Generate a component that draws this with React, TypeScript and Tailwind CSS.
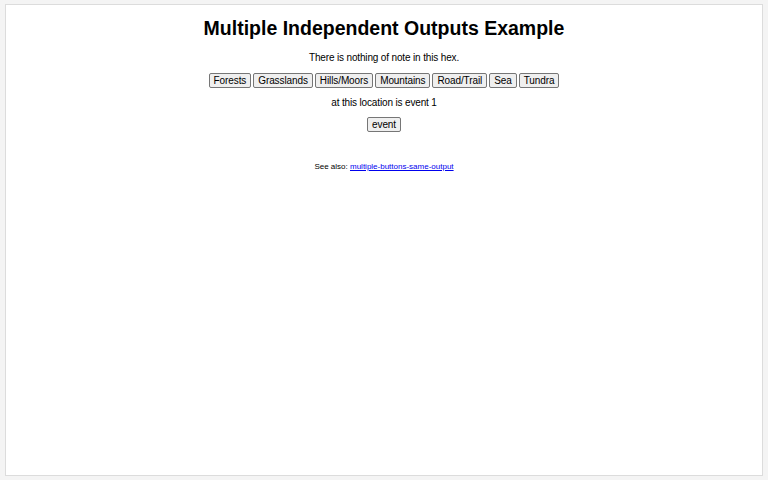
import React from "react";

const btn =
  "px-[4px] h-[15px] leading-[13px] text-[10px] tracking-[-0.1px] text-black bg-[#efefef] border border-[#767676] rounded-[2px]";

export default function App() {
  const terrains = ["Forests", "Grasslands", "Hills/Moors", "Mountains", "Road/Trail", "Sea", "Tundra"];
  return (
    <div className="w-[768px] h-[480px] bg-[#f4f4f4] pt-[4px] px-[5px] pb-[4px] font-['Liberation_Sans',Arial,sans-serif]">
      <div className="h-[472px] bg-white border border-[#dcdcdc] flex flex-col items-center">
        <h1 className="mt-[14px] text-[19.5px] leading-[18px] font-bold text-black">
          Multiple Independent Outputs Example
        </h1>
        <p className="mt-[15px] text-[10px] leading-[12px] tracking-[-0.15px] text-black">There is nothing of note in this hex.</p>
        <div className="mt-[9px] flex gap-[2px]">
          {terrains.map((t) => (
            <button key={t} className={btn}>
              {t}
            </button>
          ))}
        </div>
        <p className="mt-[9px] text-[10px] leading-[12px] tracking-[-0.15px] text-black">at this location is event 1</p>
        <button className={btn + " mt-[8px]"}>event</button>
        <p className="mt-[30px] text-[8px] leading-[10px] text-black">
          See also:{" "}
          <a href="#" className="text-[#0000ee] underline">
            multiple-buttons-same-output
          </a>
        </p>
      </div>
    </div>
  );
}
